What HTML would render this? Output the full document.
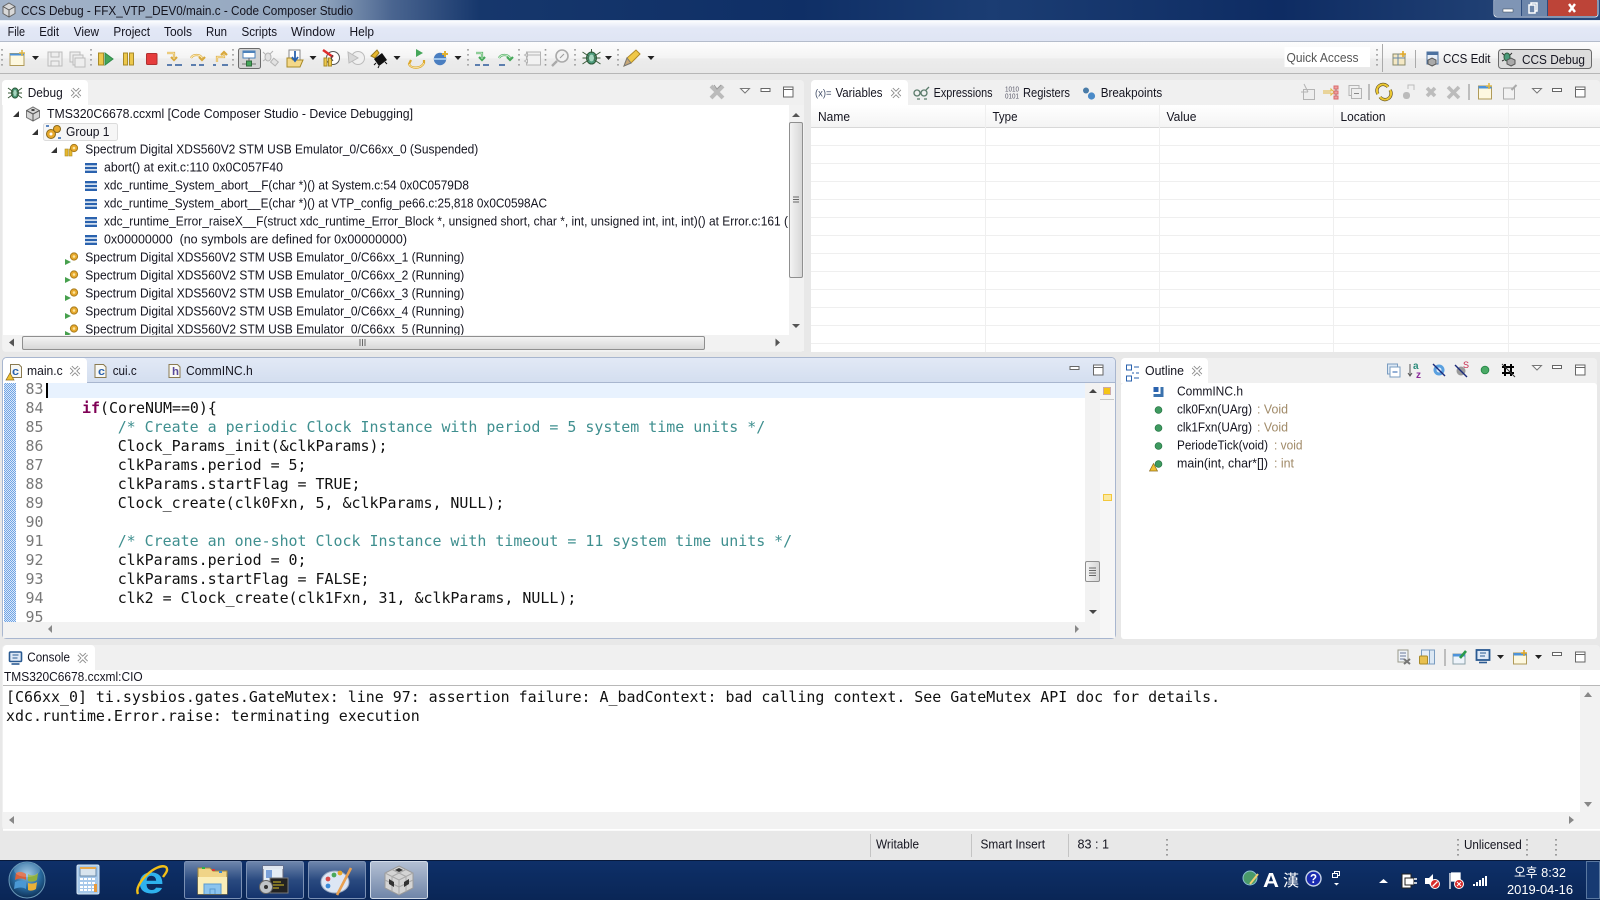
<!DOCTYPE html>
<html><head><meta charset="utf-8"><title>CCS Debug</title>
<style>
html,body{margin:0;padding:0;background:#e8e8e8;width:1600px;height:900px;overflow:hidden}
svg{display:block}
text{font-family:"Liberation Sans","Noto Sans CJK KR",sans-serif;font-size:13px;fill:#14141f}
.c text,text.m{font-family:"DejaVu Sans Mono","Liberation Mono",monospace;font-size:14.95px;fill:#111}
.n text{fill:#787878}
.g{fill:#a08a68}
</style></head><body>
<svg xmlns="http://www.w3.org/2000/svg" width="1600" height="900" viewBox="0 0 1600 900">
<defs>
<linearGradient id="tb" x1="0" x2="1" y1="0" y2="0"><stop offset="0" stop-color="#a3b3c8"/><stop offset=".2" stop-color="#93a7bf"/><stop offset=".245" stop-color="#4a6590"/><stop offset=".3" stop-color="#16376c"/><stop offset=".5" stop-color="#0f2f66"/><stop offset=".62" stop-color="#1b3d73"/><stop offset=".8" stop-color="#0e2c63"/><stop offset="1" stop-color="#294a7c"/></linearGradient>
<linearGradient id="mn" x1="0" x2="0" y1="0" y2="1"><stop offset="0" stop-color="#fbfcfe"/><stop offset=".35" stop-color="#e3e8f6"/><stop offset="1" stop-color="#dfe5f4"/></linearGradient>
<linearGradient id="tl" x1="0" x2="0" y1="0" y2="1"><stop offset="0" stop-color="#fdfdfd"/><stop offset=".5" stop-color="#f4f4f4"/><stop offset=".55" stop-color="#ececec"/><stop offset="1" stop-color="#e8e8e8"/></linearGradient>
<linearGradient id="et" x1="0" x2="0" y1="0" y2="1"><stop offset="0" stop-color="#e2e9f6"/><stop offset="1" stop-color="#d3deef"/></linearGradient>
<linearGradient id="hd" x1="0" x2="0" y1="0" y2="1"><stop offset="0" stop-color="#fff"/><stop offset="1" stop-color="#f4f4f4"/></linearGradient>
<linearGradient id="sb" x1="0" x2="0" y1="0" y2="1"><stop offset="0" stop-color="#f4f4f4"/><stop offset="1" stop-color="#d6d6d6"/></linearGradient>
<linearGradient id="sv" x1="0" x2="1" y1="0" y2="0"><stop offset="0" stop-color="#f4f4f4"/><stop offset="1" stop-color="#d6d6d6"/></linearGradient>
<linearGradient id="task" x1="0" x2="0" y1="0" y2="1"><stop offset="0" stop-color="#0e3069"/><stop offset="1" stop-color="#0a2656"/></linearGradient>
<linearGradient id="bt" x1="0" x2="0" y1="0" y2="1"><stop offset="0" stop-color="#6f87ad"/><stop offset=".5" stop-color="#2a4a80"/><stop offset="1" stop-color="#14336c"/></linearGradient>
<linearGradient id="ba" x1="0" x2="0" y1="0" y2="1"><stop offset="0" stop-color="#b4c0d4"/><stop offset="1" stop-color="#6f85a8"/></linearGradient>
<radialGradient id="orb" cx=".5" cy=".35" r=".65"><stop offset="0" stop-color="#8fc0e0"/><stop offset=".55" stop-color="#2a6ea4"/><stop offset="1" stop-color="#0d2f55"/></radialGradient>
<pattern id="hatch" width="2" height="2" patternUnits="userSpaceOnUse"><rect width="2" height="2" fill="#dce8f8"/><rect width="1" height="1" fill="#6ea4e6"/><rect x="1" y="1" width="1" height="1" fill="#6ea4e6"/></pattern>
<g id="x"><path d="M-4-4L4 4M4-4L-4 4" stroke="#8a8a8a" stroke-width="3.4" fill="none"/><path d="M-4-4L4 4M4-4L-4 4" stroke="#fff" stroke-width="1.6" fill="none"/></g>
<g id="vm"><path d="M-4.5-2.5H4.5L0 2Z" fill="#fff" stroke="#777"/></g>
<g id="mi"><rect x="-4.5" y="-1.5" width="9" height="3" fill="#fff" stroke="#666"/></g>
<g id="ma"><rect x="-4.5" y="-5" width="9.5" height="10" fill="#fff" stroke="#666"/><path d="M-4.5-2.5H5" stroke="#666"/></g>
<g id="ar"><path d="M-3.5-2H3.5L0 2Z" fill="#222"/></g>
<g id="sep"><path d="M0-9V9" stroke="#9a9a9a" stroke-width="1.6" stroke-dasharray="1.6 3.4"/></g>
<g id="fr"><rect x="0" y="-5" width="12" height="2.4" fill="#2a62ae"/><rect x="0" y="-1.2" width="12" height="2.4" fill="#2a62ae"/><rect x="0" y="2.6" width="12" height="2.4" fill="#2a62ae"/></g>
<g id="thr"><path d="M-7 1V7L-1 4Z" fill="#47a04e"/><circle cx="2" cy="-1.5" r="3.6" fill="#e8a92c" stroke="#a87c1c"/><circle cx="2" cy="-1.5" r="1.3" fill="#fbe6a0"/></g>
<g id="dot"><circle r="3.4" fill="#3f9a60" stroke="#2a7a48" stroke-width=".8"/></g>
<g id="tri"><path d="M-3 3H3V-3Z" fill="#333"/></g>
<g id="fc"><path d="M-5.5-6.5H3L5.5-4V6.5H-5.5Z" fill="#f8f8f4" stroke="#8a7a50"/></g>
</defs>

<!-- title -->
<rect width="1600" height="21" fill="url(#tb)"/>
<rect x="0" y="20" width="1600" height="1" fill="#e8eef6"/>
<g transform="translate(9,10)"><path d="M0-7L6-3.5V3.5L0 7-6 3.5V-3.5Z" fill="#d8d8d8" stroke="#666"/><path d="M0 0L6-3.5M0 0L-6-3.5M0 0V7" stroke="#555"/></g>
<text x="21" y="15" textLength="332" lengthAdjust="spacingAndGlyphs">CCS Debug - FFX_VTP_DEV0/main.c - Code Composer Studio</text>
<rect x="1494" y="-2" width="104" height="19" rx="3" fill="#2d4c7e" stroke="#dce4ee"/>
<rect x="1495" y="0" width="26" height="16" fill="#7f95b5"/>
<rect x="1522" y="0" width="25" height="16" fill="#6d86aa"/>
<rect x="1548" y="0" width="49" height="16" fill="#bd4438"/>
<rect x="1503" y="9" width="10" height="3" fill="#fff" stroke="#345" stroke-width=".5"/>
<rect x="1531" y="3" width="6" height="8" fill="none" stroke="#fff" stroke-width="1.5"/><rect x="1529" y="5" width="6" height="8" fill="#6d86aa" stroke="#fff" stroke-width="1.5"/>
<path d="M1569 4l6 8M1575 4l-6 8" stroke="#fff" stroke-width="2.4"/>

<!-- menu -->
<rect y="21" width="1600" height="20" fill="url(#mn)"/>
<rect y="41" width="1600" height="1" fill="#b4bccb"/>
<text x="7.6" y="36" textLength="17.5" lengthAdjust="spacingAndGlyphs">File</text>
<text x="39.3" y="36" textLength="19.7" lengthAdjust="spacingAndGlyphs">Edit</text>
<text x="73.7" y="36" textLength="25.3" lengthAdjust="spacingAndGlyphs">View</text>
<text x="113.4" y="36" textLength="36.6" lengthAdjust="spacingAndGlyphs">Project</text>
<text x="164" y="36" textLength="28" lengthAdjust="spacingAndGlyphs">Tools</text>
<text x="206" y="36" textLength="21" lengthAdjust="spacingAndGlyphs">Run</text>
<text x="241.5" y="36" textLength="35.5" lengthAdjust="spacingAndGlyphs">Scripts</text>
<text x="291" y="36" textLength="44" lengthAdjust="spacingAndGlyphs">Window</text>
<text x="349.5" y="36" textLength="24.5" lengthAdjust="spacingAndGlyphs">Help</text>

<!-- toolbar -->
<rect y="42" width="1600" height="31" fill="url(#tl)"/>
<rect y="73" width="1600" height="1" fill="#b6b6b6"/>
<use href="#sep" x="2" y="58"/><use href="#sep" x="91" y="58"/><use href="#sep" x="233" y="58"/><use href="#sep" x="468" y="58"/><use href="#sep" x="519" y="58"/><use href="#sep" x="545.5" y="58"/><use href="#sep" x="575" y="58"/><use href="#sep" x="618" y="58"/>
<g transform="translate(17,59)"><rect x="-7" y="-5.5" width="14" height="12" fill="#fdf8e0" stroke="#b09a58"/><rect x="-7" y="-5.5" width="14" height="2" fill="#4d93da"/><path d="M5-9V-3M2-6H8" stroke="#e0b848" stroke-width="1.6"/></g>
<use href="#ar" x="35.5" y="58"/>
<g transform="translate(55,59)" fill="#eee" stroke="#bcbcbc"><rect x="-7" y="-7" width="14" height="14"/><rect x="-4" y="-7" width="8" height="5"/><rect x="-4" y="2" width="8" height="5"/></g>
<g transform="translate(77,59)" fill="#eee" stroke="#bcbcbc"><rect x="-7" y="-7" width="10" height="10"/><rect x="-4" y="-4" width="10" height="10"/><rect x="-2" y="-1" width="10" height="9"/></g>
<g transform="translate(0,59)"><rect x="98.5" y="-6" width="5" height="12" fill="#edc84c" stroke="#a88a28"/><path d="M105-6L113 0 105 6Z" fill="#45a65a" stroke="#2f8a48"/>
<rect x="123.5" y="-6" width="4" height="12" fill="#edc84c" stroke="#a88a28"/><rect x="129.5" y="-6" width="4" height="12" fill="#edc84c" stroke="#a88a28"/>
<rect x="146.5" y="-5.5" width="10.5" height="11" rx="1" fill="#e63c3c" stroke="#b03030"/></g>
<g fill="none" stroke="#d8a83c" stroke-width="2.2"><path d="M167 53h7v6M171 57l3 3 3-3"/><path d="M191 58a6 5 0 0 1 11 0M199 57l3 3 3-3"/><path d="M217 62v-5h7v-3M221 55l3-3 3 3"/></g>
<g fill="none" stroke="#fff0c0" stroke-width=".9"><path d="M167 53h7v6"/><path d="M191 58a6 5 0 0 1 11 0"/><path d="M217 62v-5h7v-3"/></g>
<path d="M167 65h5M175 65h7M191 65h5M199 65h5M213 65h3M222 65h6" stroke="#2c5a9a" stroke-width="1.4"/>
<rect x="238.5" y="48.5" width="22" height="20" rx="2" fill="#d4d4d4" stroke="#6b6b6b"/>
<g transform="translate(249,58)"><rect x="-6" y="-7" width="12" height="7" fill="#fff" stroke="#4d82bb"/><rect x="-6" y="-7" width="12" height="2" fill="#4d82bb"/><rect x="-2.5" y="3" width="5" height="5" fill="#45a65a" stroke="#2f6a3a"/><path d="M0 0V3" stroke="#666"/><path d="M-7 6H-3M3 6H7" stroke="#777"/></g>
<g transform="translate(270,58)" stroke="#b4b4b4" fill="#e2e2e2"><ellipse cx="-2" cy="-1" rx="3" ry="4"/><rect x="2" y="1" width="6" height="5" transform="rotate(40 4 3)"/><path d="M-7-6l3 3M-7 3l3-2M3-7l-3 3"/></g>
<g transform="translate(295,58)"><path d="M-6-8H5V7H-6Z" fill="#fff" stroke="#888"/><path d="M-8 0H-4L-2 2H8L5 9H-8Z" fill="#f4d888" stroke="#a88a28"/><path d="M0-7V2M-3-1L0 3 3-1" stroke="#2a62ae" stroke-width="1.8" fill="none"/></g>
<use href="#ar" x="313" y="58"/>
<g transform="translate(330,58)"><circle cx="3" cy="0" r="6.5" fill="#fff" stroke="#555"/><rect x="-6" y="0" width="3" height="8" fill="#edc84c" stroke="#a88a28"/><rect x="-1.5" y="0" width="3" height="8" fill="#edc84c" stroke="#a88a28"/><path d="M-7-8L3-1" stroke="#e02a2a" stroke-width="2.5"/><path d="M3-3L1 0 3 3" stroke="#444" fill="none"/></g>
<g transform="translate(356,58)"><circle cx="2" cy="0" r="6.5" fill="#f0f0f0" stroke="#bbb"/><path d="M-8-6L2 0-7 5Z" fill="#d8d8d8" stroke="#bbb"/></g>
<g transform="translate(379,58)"><path d="M-8-2L-2-8 0-5-4 0Z" fill="#e8b82c" stroke="#9a7a1c"/><path d="M-5 1L3-5 8 2 0 8Z" fill="#111"/><path d="M-3 5l-2 2M0 8l-1 2M6 4l2 2" stroke="#111"/></g>
<use href="#ar" x="397" y="58"/>
<g transform="translate(417,58)"><path d="M-1-9V-1L6-5Z" fill="#45a65a"/><path d="M-6 2L-8 6C-6 11 4 11 7 5V2" stroke="#dca82c" stroke-width="2.2" fill="none"/><path d="M-8 6C-6 11 4 11 7 5" stroke="#fff0c0" stroke-width=".8" fill="none"/></g>
<g transform="translate(440,58)"><circle r="6.2" fill="#4a7ec0" cy="1"/><path d="M-6 1H6" stroke="#9cc4ec" stroke-width="2"/><path d="M5-7V-1M2-4H8" stroke="#e0b030" stroke-width="2"/></g>
<use href="#ar" x="458" y="58"/>
<g fill="none" stroke="#46a85a" stroke-width="2.2"><path d="M476 53h6v6M479 57l3 3 3-3"/><path d="M499 58a6 5 0 0 1 11 0M507 57l3 3 3-3"/></g>
<g fill="none" stroke="#d8f4d8" stroke-width=".9"><path d="M476 53h6v6"/><path d="M499 58a6 5 0 0 1 11 0"/></g>
<path d="M475 65h5M483 65h6M499 65h6" stroke="#2c5a9a" stroke-width="1.4"/>
<g transform="translate(532.5,58)" fill="#f2f2f2" stroke="#b4b4b4"><rect x="-6" y="-6" width="14" height="13"/><path d="M-8-3l3-2v4zM-8 3l3-2v4z"/><path d="M-6-3H8"/></g>
<g transform="translate(560,58)"><circle cx="2" cy="-2" r="6" fill="#f2f2f2" stroke="#aaa" stroke-width="1.6"/><path d="M-3 3L-8 8" stroke="#aaa" stroke-width="2.4"/><path d="M0 0L4-4" stroke="#999"/></g>
<g transform="translate(591.5,58)"><ellipse rx="5" ry="6" fill="#4b9a7a" stroke="#2d5a3a"/><path d="M-9-6L9 6M-9 6L9-6M-9 0H9M0-9V-5" stroke="#3a5a3a" fill="none"/><ellipse rx="2.5" ry="3.5" fill="#a6d6c0"/></g>
<use href="#ar" x="608.5" y="58"/>
<g transform="translate(632,58)"><path d="M-8 8L-5 0 4-8 8-4-1 5Z" fill="#f0c848" stroke="#b08a28"/><path d="M-8 8L-5 0-1 5Z" fill="#c8a878" stroke="#777"/></g>
<use href="#ar" x="651" y="58"/>
<!-- right toolbar -->
<rect x="1284.5" y="47" width="85.5" height="20" fill="#fff"/>
<text x="1286.5" y="62" textLength="72" lengthAdjust="spacingAndGlyphs" style="fill:#555">Quick Access</text>
<use href="#sep" x="1377" y="58"/>
<path d="M1382.5 44V72" stroke="#aaa"/>
<g transform="translate(1399,59)"><rect x="-6" y="-5" width="12" height="11" fill="#f4e8c4" stroke="#8a8a6a"/><path d="M-6-1H6M-1-5V6" stroke="#6688aa"/><path d="M4-8V-2M1-5H7" stroke="#e0a828" stroke-width="1.6"/></g>
<path d="M1415.5 50V68" stroke="#aaa"/>
<g transform="translate(1432,59)"><rect x="-5" y="-7" width="11" height="12" fill="#e8eef6" stroke="#4d72a0"/><rect x="-5" y="-7" width="11" height="3" fill="#4d72a0"/><path d="M0 7L4 5V1L0-1-4 1V5Z" fill="#aaa" stroke="#555"/></g>
<text x="1443" y="63" textLength="47.5" lengthAdjust="spacingAndGlyphs">CCS Edit</text>
<rect x="1498.5" y="49.5" width="93" height="19" rx="3" fill="#dcdcdc" stroke="#6b6b6b"/>
<g transform="translate(1509,59)"><ellipse cx="-2" cy="-2" rx="3" ry="4" fill="#4b9a7a" stroke="#2d5a3a"/><path d="M-7-6l2 2M-7 2l2-1M3-6l-2 2" stroke="#333"/><path d="M2 7L6 5V1L2-1-2 1V5Z" fill="#aaa" stroke="#555"/></g>
<text x="1522" y="64" textLength="63" lengthAdjust="spacingAndGlyphs">CCS Debug</text>

<!-- Debug panel -->
<rect x="2" y="80" width="802" height="272" rx="4" fill="#f0f0f0"/>
<rect x="3" y="105" width="801" height="246" fill="#fff"/>
<path d="M2 105V84a4 4 0 0 1 4-4H84a4 4 0 0 1 4 4V105Z" fill="#fff"/>
<g transform="translate(15,93)"><ellipse rx="3.5" ry="5" fill="#4b9a7a" stroke="#2d5a3a"/><path d="M-7-5L7 5M-7 5L7-5M-7 0H7" stroke="#3a5a3a"/><ellipse rx="1.8" ry="3" fill="#a6d6c0"/></g>
<text x="27.7" y="97" textLength="35" lengthAdjust="spacingAndGlyphs">Debug</text>
<use href="#x" x="76" y="93"/>
<g transform="translate(717,92)"><path d="M-6-6L6 6M6-6L-6 6" stroke="#bbb" stroke-width="4"/><path d="M-3-7L0-3 4-7" stroke="#999" fill="none"/></g>
<use href="#vm" x="745" y="91"/><use href="#mi" x="765.5" y="90"/><use href="#ma" x="788" y="92"/>

<use href="#tri" x="16" y="114"/><use href="#tri" x="35" y="132"/><use href="#tri" x="54" y="150"/>
<g transform="translate(33,114)"><path d="M0-7L6.5-3.5V3.5L0 7-6.5 3.5V-3.5Z" fill="#d6d6d6" stroke="#777"/><path d="M0 0L6.5-3.5M0 0L-6.5-3.5M0 0V7" stroke="#555"/><rect x="-1.5" y="-5" width="3" height="2" fill="#444"/></g>
<text x="47" y="118" textLength="366" lengthAdjust="spacingAndGlyphs">TMS320C6678.ccxml [Code Composer Studio - Device Debugging]</text>
<rect x="43.5" y="123.5" width="74" height="17" rx="2" fill="#f6f6f6" stroke="#dcdcdc"/>
<g transform="translate(53,132)"><circle cx="-2" cy="2" r="4.5" fill="#e8a92c" stroke="#8a6a1c"/><circle cx="4" cy="-3" r="3.5" fill="#e8a92c" stroke="#8a6a1c"/><circle cx="-2" cy="2" r="1.5" fill="#fff"/><path d="M-7-6h3M5 6h3" stroke="#2a62ae" stroke-width="1.6"/></g>
<text x="66" y="136" textLength="43.5" lengthAdjust="spacingAndGlyphs">Group 1</text>
<g transform="translate(71,150)"><rect x="-6" y="-1" width="3" height="7" fill="#e8b82c" stroke="#a88a28" stroke-width=".6"/><rect x="-2" y="-1" width="3" height="7" fill="#e8b82c" stroke="#a88a28" stroke-width=".6"/><circle cx="3" cy="-2" r="3.6" fill="#e8a92c" stroke="#a87c1c"/><circle cx="3" cy="-2" r="1.3" fill="#fbe6a0"/></g>
<text x="85.3" y="153.5" textLength="393" lengthAdjust="spacingAndGlyphs">Spectrum Digital XDS560V2 STM USB Emulator_0/C66xx_0 (Suspended)</text>
<use href="#fr" x="85" y="168"/><use href="#fr" x="85" y="186"/><use href="#fr" x="85" y="204"/><use href="#fr" x="85" y="222"/><use href="#fr" x="85" y="240"/>
<text x="104" y="171.5" textLength="179" lengthAdjust="spacingAndGlyphs">abort() at exit.c:110 0x0C057F40</text>
<text x="104" y="189.5" textLength="365" lengthAdjust="spacingAndGlyphs">xdc_runtime_System_abort__F(char *)() at System.c:54 0x0C0579D8</text>
<text x="104" y="207.5" textLength="443" lengthAdjust="spacingAndGlyphs">xdc_runtime_System_abort__E(char *)() at VTP_config_pe66.c:25,818 0x0C0598AC</text>
<text x="104" y="225.5" textLength="684" lengthAdjust="spacingAndGlyphs">xdc_runtime_Error_raiseX__F(struct xdc_runtime_Error_Block *, unsigned short, char *, int, unsigned int, int, int)() at Error.c:161 (</text>
<text x="104" y="243.5" textLength="303" lengthAdjust="spacingAndGlyphs">0x00000000&#160; (no symbols are defined for 0x00000000)</text>
<use href="#thr" x="72" y="258"/><use href="#thr" x="72" y="276"/><use href="#thr" x="72" y="294"/><use href="#thr" x="72" y="312"/><use href="#thr" x="72" y="330"/>
<text x="85.3" y="261.5" textLength="379" lengthAdjust="spacingAndGlyphs">Spectrum Digital XDS560V2 STM USB Emulator_0/C66xx_1 (Running)</text>
<text x="85.3" y="279.5" textLength="379" lengthAdjust="spacingAndGlyphs">Spectrum Digital XDS560V2 STM USB Emulator_0/C66xx_2 (Running)</text>
<text x="85.3" y="297.5" textLength="379" lengthAdjust="spacingAndGlyphs">Spectrum Digital XDS560V2 STM USB Emulator_0/C66xx_3 (Running)</text>
<text x="85.3" y="315.5" textLength="379" lengthAdjust="spacingAndGlyphs">Spectrum Digital XDS560V2 STM USB Emulator_0/C66xx_4 (Running)</text>
<text x="85.3" y="333.5" textLength="379" lengthAdjust="spacingAndGlyphs">Spectrum Digital XDS560V2 STM USB Emulator_0/C66xx_5 (Running)</text>
<rect x="3" y="335" width="801" height="16" fill="#f2f2f2"/>
<rect x="789" y="105" width="15" height="230" fill="#f2f2f2"/>
<rect x="22.5" y="336.5" width="682" height="13" rx="1.5" fill="url(#sb)" stroke="#8f8f8f"/>
<path d="M360 339v7M362.5 339v7M365 339v7" stroke="#666"/>
<path d="M9 342.5L14 338.5V346.5Z" fill="#555"/><path d="M780 342.5L775.5 338.5V346.5Z" fill="#555"/>
<rect x="789.5" y="122.5" width="13" height="155" rx="1.5" fill="url(#sv)" stroke="#8f8f8f"/>
<path d="M793 197h6M793 199.5h6M793 202h6" stroke="#666"/>
<path d="M796 113L792 117H800Z" fill="#555"/><path d="M796 328L792 324H800Z" fill="#555"/>

<!-- Variables panel -->
<rect x="811" y="80" width="789" height="272" rx="4" fill="#f0f0f0"/>
<rect x="811" y="105" width="789" height="247" fill="#fff"/>
<path d="M811 105V84a4 4 0 0 1 4-4H904a4 4 0 0 1 4 4V105Z" fill="#fff"/>
<text x="815" y="96.5" textLength="16.5" lengthAdjust="spacingAndGlyphs" style="font-size:10.5px;fill:#44506a">(x)=</text>
<text x="835.5" y="97" textLength="47" lengthAdjust="spacingAndGlyphs">Variables</text>
<use href="#x" x="896" y="93"/>
<g transform="translate(921,93)" fill="none" stroke="#5a7a6a" stroke-width="1.3"><circle cx="-4" cy="0" r="3"/><circle cx="3" cy="0" r="3"/><path d="M-1 0H0M5-3L8-6M-4 6H-1M3 6H6"/></g>
<text x="933.6" y="97" textLength="59" lengthAdjust="spacingAndGlyphs">Expressions</text>
<text x="1005" y="91.5" textLength="14" lengthAdjust="spacingAndGlyphs" style="font-size:7px;fill:#556">1010</text><text x="1005" y="98.5" textLength="14" lengthAdjust="spacingAndGlyphs" style="font-size:7px;fill:#556">0101</text>
<text x="1023" y="97" textLength="47" lengthAdjust="spacingAndGlyphs">Registers</text>
<circle cx="1086" cy="90.5" r="3" fill="#4a7ca8"/><circle cx="1091.5" cy="96" r="3.6" fill="#4a8ac8"/>
<text x="1100.7" y="97" textLength="61.5" lengthAdjust="spacingAndGlyphs">Breakpoints</text>
<g fill="none" stroke="#b4b4b4"><rect x="1303.5" y="89.5" width="11" height="10" fill="#eee"/><path d="M1304 84l4 8M1301 92h7"/><path d="M1323 91h8v-2l3 3-3 3v-2h-8" stroke="#e2b844"/><path d="M1336 87v12" stroke="#777"/><rect x="1334" y="86" width="4" height="3" fill="#f0a0a0" stroke="#d86a6a"/><rect x="1334" y="91" width="4" height="3" fill="#f0a0a0" stroke="#d86a6a"/><rect x="1334" y="96" width="4" height="3" fill="#f0a0a0" stroke="#d86a6a"/><rect x="1349" y="85.5" width="10" height="10"/><rect x="1351.5" y="88.5" width="10" height="10" fill="#eee"/><path d="M1354 93.5h5" stroke="#888"/></g>
<path d="M1369 84V100" stroke="#8a8a8a"/>
<g transform="translate(1384,92)"><path d="M-6 2A6 6 0 0 1 4-5M6-2A6 6 0 0 1-4 5" stroke="#5a4a20" stroke-width="3.2" fill="none"/><path d="M-6 2A6 6 0 0 1 4-5M6-2A6 6 0 0 1-4 5" stroke="#ecc832" stroke-width="2" fill="none"/></g>
<g transform="translate(1409,92)" fill="#bbb"><rect x="-6" y="0" width="7" height="7" rx="3"/><path d="M0-7h5v5M-1-3v-4h4" stroke="#bbb" fill="none"/></g>
<path d="M1427 88l8 8M1435 88l-8 8" stroke="#bcbcbc" stroke-width="3.6"/>
<path d="M1448 87l11 11M1459 87l-11 11" stroke="#bcbcbc" stroke-width="3.6"/>
<path d="M1469 84V100" stroke="#8a8a8a"/>
<g transform="translate(1485,92)"><rect x="-6.5" y="-6" width="13" height="13" fill="#fdf8e0" stroke="#b09a58"/><rect x="-6.5" y="-6" width="13" height="2.5" fill="#4d93da"/><path d="M4-9V-3M1-6H7" stroke="#e0b848" stroke-width="1.6"/></g>
<g transform="translate(1509.5,92)"><rect x="-6" y="-4" width="11" height="11" fill="#f2f2f2" stroke="#aaa"/><path d="M2-2L7-7" stroke="#aaa" stroke-width="2"/></g>
<use href="#vm" x="1537" y="91"/><use href="#mi" x="1557" y="90"/><use href="#ma" x="1580" y="92"/>
<rect x="811" y="105" width="789" height="22" fill="url(#hd)"/>
<rect x="811" y="127" width="789" height="1" fill="#d8d8d8"/>
<g stroke="#efefef" fill="none"><path d="M811 145.5H1600M811 163.5H1600M811 181.5H1600M811 199.5H1600M811 217.5H1600M811 235.5H1600M811 253.5H1600M811 271.5H1600M811 289.5H1600M811 307.5H1600M811 325.5H1600M811 343.5H1600"/><path d="M985.5 105V352M1159.5 105V352M1333.5 105V352M1508.5 105V352"/></g>
<text x="818" y="121" textLength="32" lengthAdjust="spacingAndGlyphs">Name</text>
<text x="992.5" y="121" textLength="25" lengthAdjust="spacingAndGlyphs">Type</text>
<text x="1166.5" y="121" textLength="30" lengthAdjust="spacingAndGlyphs">Value</text>
<text x="1340.5" y="121" textLength="45" lengthAdjust="spacingAndGlyphs">Location</text>

<!-- Editor -->
<rect x="2.5" y="357.5" width="1113" height="281" rx="4" fill="#fff" stroke="#a8b6cf"/>
<path d="M3 383V362a4 4 0 0 1 4-4H1111a4 4 0 0 1 4 4V383Z" fill="url(#et)"/>
<rect x="3" y="382" width="1112" height="1" fill="#a8b6cf"/>
<path d="M3 383V362a4 4 0 0 1 4-4H83a4 4 0 0 1 4 4V383Z" fill="#fff"/>
<use href="#fc" x="16" y="371"/><text x="12" y="375" textLength="7" lengthAdjust="spacingAndGlyphs" style="font-size:11px;fill:#2a62ae;font-weight:bold">c</text>
<path d="M10 373L14 380H6Z" fill="#f0c030" stroke="#8a6a1c" stroke-width=".7"/>
<text x="27" y="375" textLength="35.7" lengthAdjust="spacingAndGlyphs">main.c</text>
<use href="#x" x="75" y="371"/>
<use href="#fc" x="100.5" y="371"/><text x="98" y="375" textLength="7" lengthAdjust="spacingAndGlyphs" style="font-size:11px;fill:#2a62ae;font-weight:bold">c</text>
<text x="112.7" y="375" textLength="24" lengthAdjust="spacingAndGlyphs">cui.c</text>
<use href="#fc" x="174.5" y="371"/><text x="172" y="375" textLength="7" lengthAdjust="spacingAndGlyphs" style="font-size:11px;fill:#5a4a9a;font-weight:bold">h</text>
<text x="186" y="375" textLength="66.7" lengthAdjust="spacingAndGlyphs">CommINC.h</text>
<use href="#mi" x="1074.5" y="368"/><use href="#ma" x="1098" y="370"/>
<rect x="4" y="383" width="12" height="239" fill="url(#hatch)"/>
<rect x="46" y="383" width="1039" height="15" fill="#e8f2fe"/>
<rect x="46" y="383" width="2" height="15" fill="#000"/>
<g class="c">
<text x="82" y="413"><tspan style="fill:#7f0055;font-weight:bold">if</tspan>(CoreNUM==0){</text>
<text x="117.7" y="432" style="fill:#3f8f8f">/* Create a periodic Clock Instance with period = 5 system time units */</text>
<text x="117.7" y="451">Clock_Params_init(&amp;clkParams);</text>
<text x="117.7" y="470">clkParams.period = 5;</text>
<text x="117.7" y="489">clkParams.startFlag = TRUE;</text>
<text x="117.7" y="508">Clock_create(clk0Fxn, 5, &amp;clkParams, NULL);</text>
<text x="117.7" y="546" style="fill:#3f8f8f">/* Create an one-shot Clock Instance with timeout = 11 system time units */</text>
<text x="117.7" y="565">clkParams.period = 0;</text>
<text x="117.7" y="584">clkParams.startFlag = FALSE;</text>
<text x="117.7" y="603">clk2 = Clock_create(clk1Fxn, 31, &amp;clkParams, NULL);</text>
</g>
<g class="c n">
<text x="25.5" y="394">83</text><text x="25.5" y="413">84</text><text x="25.5" y="432">85</text><text x="25.5" y="451">86</text><text x="25.5" y="470">87</text><text x="25.5" y="489">88</text><text x="25.5" y="508">89</text><text x="25.5" y="527">90</text><text x="25.5" y="546">91</text><text x="25.5" y="565">92</text><text x="25.5" y="584">93</text><text x="25.5" y="603">94</text><text x="25.5" y="622">95</text>
</g>
<rect x="3" y="622" width="1097" height="16" fill="#f2f2f2"/>
<rect x="1085" y="383" width="15" height="255" fill="#f2f2f2"/>
<rect x="1100" y="383" width="15" height="255" fill="#f6f6f6"/>
<path d="M1100 399.5H1114" stroke="#c8c8c8"/>
<rect x="1103.5" y="387.5" width="7" height="7" fill="#f5c518" stroke="#caa"/>
<rect x="1103.5" y="494.5" width="8" height="6" fill="#fbe9a0" stroke="#f3c83c"/>
<path d="M1093 389L1089 393H1097Z" fill="#444"/><path d="M1093 614L1089 610H1097Z" fill="#444"/>
<rect x="1085.5" y="561.5" width="14" height="20" rx="1.5" fill="url(#sv)" stroke="#8f8f8f"/>
<path d="M1089 568h7M1089 570.5h7M1089 573h7M1089 575.5h7" stroke="#666"/>
<path d="M52 625v8l-4-4ZM1075 625v8l4-4Z" fill="#888"/>

<!-- Outline -->
<rect x="1121" y="358" width="476" height="281" rx="4" fill="#f0f0f0"/>
<rect x="1121" y="383" width="476" height="256" rx="3" fill="#fff"/>
<path d="M1121 383V362a4 4 0 0 1 4-4H1204a4 4 0 0 1 4 4V383Z" fill="#fff"/>
<g fill="#fff" stroke="#2a62ae"><rect x="1126.5" y="365" width="5" height="5"/><rect x="1126.5" y="376" width="5" height="5"/><path d="M1134 367h5M1132 373h2M1136 373h3M1134 378h5" fill="none"/></g>
<text x="1145" y="375" textLength="39" lengthAdjust="spacingAndGlyphs">Outline</text>
<use href="#x" x="1197" y="371"/>
<g transform="translate(1393.5,370)"><rect x="-6" y="-6" width="10" height="10" fill="#dce8f4" stroke="#7a9cc0"/><rect x="-3.5" y="-3" width="10" height="10" fill="#fff" stroke="#7a9cc0"/><path d="M-1 2H4" stroke="#2a62ae"/></g>
<g transform="translate(1416,370)"><path d="M-6-6V6M-8 3L-6 6-4 3" stroke="#555" fill="none"/><text x="-3" y="-1" style="font-size:10px;fill:#2a8a7a;font-weight:bold">a</text><text x="0" y="8" style="font-size:10px;fill:#8a2a9a;font-weight:bold">z</text></g>
<g transform="translate(1439,370)"><circle r="5.5" fill="#5aa0e0"/><circle r="2.5" fill="#dcecf8"/><path d="M-6-6L6 6" stroke="#1a2a7a" stroke-width="1.4"/></g>
<g transform="translate(1461,370)"><circle cy="1" r="4.5" fill="#9a9a9a"/><path d="M-6-5L6 7" stroke="#1a2a7a" stroke-width="1.4"/><text x="2" y="-2" style="font-size:9px;fill:#c8284a">S</text></g>
<circle cx="1485" cy="370" r="3.8" fill="#4aaa66" stroke="#2a8a4a"/>
<g transform="translate(1508,370)" stroke="#000" fill="none" stroke-width="2"><path d="M-3-6V6M3-6V6M-6-3H6M-6 3H6"/><path d="M-6-6L7 7" stroke-width="1" stroke="#333"/></g>
<use href="#vm" x="1537" y="368"/><use href="#mi" x="1557" y="367"/><use href="#ma" x="1580" y="370"/>
<g transform="translate(1158.5,392)"><rect x="-5" y="-5" width="5" height="5" fill="#2a62ae"/><path d="M2-5H5V5H-5V2H2Z" fill="#3a72ae"/></g>
<text x="1177" y="395.5" textLength="66" lengthAdjust="spacingAndGlyphs">CommINC.h</text>
<use href="#dot" x="1158.5" y="410"/><use href="#dot" x="1158.5" y="428"/><use href="#dot" x="1158.5" y="446"/><use href="#dot" x="1158.5" y="464"/>
<path d="M1153.5 463.5L1157.5 471H1149.5Z" fill="#f0c030" stroke="#8a6a1c" stroke-width=".7"/>
<text x="1177" y="413.5" textLength="75" lengthAdjust="spacingAndGlyphs">clk0Fxn(UArg)</text><text x="1257" y="413.5" textLength="31" lengthAdjust="spacingAndGlyphs" class="g">: Void</text>
<text x="1177" y="431.5" textLength="75" lengthAdjust="spacingAndGlyphs">clk1Fxn(UArg)</text><text x="1257" y="431.5" textLength="31" lengthAdjust="spacingAndGlyphs" class="g">: Void</text>
<text x="1177" y="449.5" textLength="91" lengthAdjust="spacingAndGlyphs">PeriodeTick(void)</text><text x="1274" y="449.5" textLength="28.5" lengthAdjust="spacingAndGlyphs" class="g">: void</text>
<text x="1177" y="467.5" textLength="91" lengthAdjust="spacingAndGlyphs">main(int, char*[])</text><text x="1274" y="467.5" textLength="20" lengthAdjust="spacingAndGlyphs" class="g">: int</text>

<!-- Console -->
<rect x="2" y="645" width="1598" height="185" rx="4" fill="#f0f0f0"/>
<rect x="3" y="670" width="1597" height="160" fill="#fff"/>
<path d="M3 670V649a4 4 0 0 1 4-4H91a4 4 0 0 1 4 4V670Z" fill="#fff"/>
<g transform="translate(15.5,658)"><rect x="-6" y="-6" width="12" height="9.5" rx="1" fill="#dfe9f6" stroke="#2a5a92" stroke-width="1.6"/><path d="M-3-3H3M-3 0H2" stroke="#2a5a92"/><path d="M-4 6H4" stroke="#2a5a92" stroke-width="1.6"/></g>
<text x="27.3" y="661.5" textLength="42.7" lengthAdjust="spacingAndGlyphs">Console</text>
<use href="#x" x="82.7" y="658"/>
<g transform="translate(1403,657)"><rect x="-5" y="-7" width="10" height="12" fill="#eef2f8" stroke="#9a9a8a"/><path d="M-3-4H3M-3-1H3M-3 2H1" stroke="#6a7a9a"/><path d="M1 2L7 7M7 2L1 7" stroke="#777" stroke-width="2"/></g>
<g transform="translate(1426.5,657)"><rect x="-5" y="-7" width="13" height="14" fill="#e6eef8" stroke="#7a9cc0"/><rect x="3" y="-7" width="5" height="14" fill="#dce8f4" stroke="#7a9cc0"/><rect x="-7" y="-1" width="8" height="8" rx="1" fill="#e8c050" stroke="#a88a28"/></g>
<path d="M1445 649V666" stroke="#8a8a8a"/>
<g transform="translate(1459,658)"><rect x="-6" y="-4" width="12" height="10" fill="#eef4fb" stroke="#8aa0a8"/><rect x="-6" y="-4" width="12" height="2.5" fill="#4d93da"/><path d="M1 0L7-7" stroke="#2a9a4a" stroke-width="2.6"/></g>
<g transform="translate(1483,656)"><rect x="-6.5" y="-6" width="13" height="10" fill="#dfe9f6" stroke="#2a5a92" stroke-width="1.8"/><path d="M-3-3H3M-3 0H2" stroke="#2a5a92"/><path d="M-4 6.5H4" stroke="#2a5a92" stroke-width="1.6"/></g>
<use href="#ar" x="1500.5" y="657"/>
<g transform="translate(1520,658)"><rect x="-6.5" y="-5" width="13" height="11" fill="#fdf8e0" stroke="#b09a58"/><rect x="-6.5" y="-5" width="13" height="2.5" fill="#4d93da"/><path d="M4-8V-2M1-5H7" stroke="#e0a828" stroke-width="1.6"/></g>
<use href="#ar" x="1538.5" y="657"/>
<use href="#mi" x="1557" y="654"/><use href="#ma" x="1580" y="657"/>
<text x="4" y="681" textLength="138.7" lengthAdjust="spacingAndGlyphs">TMS320C6678.ccxml:CIO</text>
<rect x="3" y="685" width="1597" height="1" fill="#b8b8b8"/>
<text class="m" x="6" y="702">[C66xx_0] ti.sysbios.gates.GateMutex: line 97: assertion failure: A_badContext: bad calling context. See GateMutex API doc for details.</text>
<text class="m" x="6" y="721">xdc.runtime.Error.raise: terminating execution</text>
<rect x="3" y="812" width="1597" height="17" fill="#f2f2f2"/>
<rect x="1580" y="686" width="20" height="143" fill="#f2f2f2"/>
<path d="M1588 692L1584 697H1592ZM1588 807L1584 802H1592Z" fill="#888"/>
<path d="M9 820L14 816V824ZM1574 820L1569 816V824Z" fill="#888"/>
<rect x="3" y="830" width="1597" height="1" fill="#fafafa"/>

<!-- status -->
<rect y="831" width="1600" height="29" fill="#e8e8e8"/>
<path d="M870.5 834V857M971.5 834V857M1068.5 834V857" stroke="#c4c4c4"/>
<text x="876" y="848.5" textLength="43" lengthAdjust="spacingAndGlyphs">Writable</text>
<text x="980.5" y="848.5" textLength="64.5" lengthAdjust="spacingAndGlyphs">Smart Insert</text>
<text x="1077.5" y="848.5" textLength="31.5" lengthAdjust="spacingAndGlyphs">83 : 1</text>
<text x="1464" y="849" textLength="57.7" lengthAdjust="spacingAndGlyphs">Unlicensed</text>
<g stroke="#8a8a8a" stroke-width="1.6" stroke-dasharray="1.6 3.4"><path d="M1167 839V856M1458 839V856M1527 839V856M1556 839V856"/></g>

<!-- taskbar -->
<rect y="860" width="1600" height="40" fill="url(#task)"/>
<rect y="860" width="1600" height="1" fill="#08193a"/>
<circle cx="27" cy="880" r="18" fill="url(#orb)" stroke="#6a98b8" stroke-width="1"/>
<g transform="translate(27,881)"><path d="M-11-8C-7-10-4-9-1-7V-1C-4-3-8-3-12-1Z" fill="#d8603a"/><path d="M1-7C4-5 7-5 11-8L10-1C7 1 4 1 1 0Z" fill="#8fb040"/><path d="M-12 1C-8-1-4-1-1 1V8C-4 6-8 6-13 8Z" fill="#4a98d4"/><path d="M1 2C4 3 7 3 10 1L9 8C6 10 3 10 1 9Z" fill="#e8b038"/></g>
<ellipse cx="27" cy="870" rx="13" ry="7" fill="#fff" opacity=".18"/>
<g transform="translate(88,880)"><rect x="-11" y="-15" width="22" height="29" rx="1.5" fill="#a6c8ea" stroke="#d8e8f4"/><rect x="-8" y="-12" width="16" height="8" fill="#d8e4ee" stroke="#6a8aa8"/><rect x="-8" y="-13" width="16" height="2" fill="#e8a84c"/><path d="M-8-1H8M-8 3H8M-8 7H8M-8 10H8" stroke="#fff" stroke-width="2" stroke-dasharray="3 1"/><rect x="6" y="4" width="3" height="8" fill="#e89a3c"/></g>
<g transform="translate(151,880)"><text x="-13" y="13" textLength="26" lengthAdjust="spacingAndGlyphs" style="font-size:38px;font-weight:bold;fill:#2eb2ee">e</text><path d="M-13 14C-18 4 6-18 15-13 18-10 14-6 12-3" stroke="#f2c018" stroke-width="2.4" fill="none"/></g>
<rect x="184.5" y="861.5" width="57" height="37" rx="2" fill="url(#bt)" stroke="#7a90b4"/>
<rect x="246.5" y="861.5" width="57" height="37" rx="2" fill="url(#bt)" stroke="#7a90b4"/>
<rect x="308.5" y="861.5" width="57" height="37" rx="2" fill="url(#bt)" stroke="#7a90b4"/>
<rect x="370.5" y="861.5" width="57" height="37" rx="2" fill="url(#ba)" stroke="#d0dae8"/>
<g transform="translate(213,880)"><path d="M-15-12H-3L0-9H14V14H-15Z" fill="#f0d488" stroke="#a88a38"/><rect x="-11" y="-13" width="3" height="2" fill="#2ab04a"/><rect x="-1" y="-11" width="3" height="2" fill="#d83a3a"/><rect x="6" y="-9" width="3" height="2" fill="#3a8ad8"/><path d="M-15-3H14V14H-15Z" fill="#fbeeb8"/><path d="M-9 14V4H8V14M-3 14V9H2V14" fill="#8cc4ee" stroke="#5a9ad0"/></g>
<g transform="translate(274,880)"><rect x="-11" y="-14" width="20" height="22" fill="#e4ecf4" stroke="#667"/><rect x="-11" y="-14" width="20" height="3" fill="#dfe6f0"/><rect x="-8" y="-10" width="6" height="8" fill="#7aa0d8"/><rect x="-4" y="-2" width="18" height="15" fill="#222" stroke="#777"/><path d="M-1 2h8M-1 5h11M-1 8h6" stroke="#d8c028"/><circle cx="-8" cy="7" r="6.5" fill="#c0c4c8" stroke="#666"/><circle cx="-8" cy="7" r="2" fill="#333"/></g>
<g transform="translate(337,880)"><ellipse cx="-2" cy="2" rx="14" ry="11" fill="#dde6f4" stroke="#98a8c0"/><circle cx="-9" cy="-1" r="2.4" fill="#d84a4a"/><circle cx="-3" cy="-5" r="2.4" fill="#4aa85a"/><circle cx="-9" cy="6" r="2.4" fill="#3a8ad8"/><circle cx="3" cy="-7" r="2.4" fill="#e8a82c"/><path d="M0 15L14-12" stroke="#e8a050" stroke-width="2.6"/></g>
<g transform="translate(399,880)"><path d="M0-14L14-7V8L0 15-14 8V-7Z" fill="#d4d4d4" stroke="#9a9a9a"/><path d="M0 0L14-7M0 0L-14-7M0 0V15M-7-10.5L7-3.5M7-10.5L-7-3.5M-14 0L0 7M14 0L0 7M-7 -3.5V11.5M7 -3.5V11.5" stroke="#aaa"/><path d="M-4-10L0-8 4-10 0-12Z" fill="#333"/><path d="M-10-1L-5 2V7L-10 4ZM10-1L5 2V7L10 4Z" fill="#333"/></g>
<!-- tray -->
<circle cx="1250" cy="878" r="7" fill="#4a9a6a" stroke="#8ac0d0"/><path d="M1250 884L1258 874" stroke="#f0d070" stroke-width="2"/>
<text x="1263" y="887" textLength="16" lengthAdjust="spacingAndGlyphs" style="font-size:20px;font-weight:bold;fill:#fff">A</text>
<text x="1283" y="886" textLength="16" lengthAdjust="spacingAndGlyphs" style="font-size:16px;fill:#fff">漢</text>
<circle cx="1313.5" cy="878.5" r="7.5" fill="#1a2ab0" stroke="#c8d4e8" stroke-width="1.4"/>
<text x="1310" y="883" textLength="7" lengthAdjust="spacingAndGlyphs" style="font-size:13px;font-weight:bold;fill:#fff">?</text>
<rect x="1334.5" y="871.5" width="5" height="4" fill="none" stroke="#fff"/><rect x="1332.5" y="873.5" width="5" height="4" fill="#0e3069" stroke="#fff"/>
<path d="M1334 883H1339L1336.5 885.5Z" fill="#fff"/>
<path d="M1379 883L1383.5 879 1388 883Z" fill="#fff"/>
<g transform="translate(1408,881)"><rect x="-6" y="-7" width="9" height="14" fill="#fff" stroke="#222"/><rect x="-3" y="-3" width="9" height="7" fill="#fff" stroke="#222"/><path d="M6-2h3M6 2h3" stroke="#fff" stroke-width="1.6"/></g>
<g transform="translate(1432,881)"><path d="M-7-3H-3L1-7V7L-3 3H-7Z" fill="#fff"/><circle cx="3" cy="3" r="4.5" fill="#d82a2a" stroke="#fff"/><path d="M0.5 5.5L5.5 0.5" stroke="#fff" stroke-width="1.3"/></g>
<g transform="translate(1456,881)"><path d="M-6-8V8M-5-8H4V0H-5" fill="#fff" stroke="#fff" stroke-width="1.3"/><circle cx="3" cy="3" r="4.5" fill="#d82a2a" stroke="#fff"/><path d="M1 1l4 4M5 1l-4 4" stroke="#fff"/></g>
<g fill="#fff"><rect x="1473" y="884" width="2" height="2"/><rect x="1476" y="882" width="2" height="4"/><rect x="1479" y="880" width="2" height="6"/><rect x="1482" y="878" width="2" height="8"/><rect x="1485" y="876" width="2" height="10"/></g>
<text x="1514" y="877" textLength="52" lengthAdjust="spacingAndGlyphs" style="fill:#fff">오후 8:32</text>
<text x="1507" y="894" textLength="66" lengthAdjust="spacingAndGlyphs" style="fill:#fff">2019-04-16</text>
<rect x="1586.5" y="861.5" width="13" height="37" fill="#173a72" stroke="#5a78a0"/>
</svg>
</body></html>
